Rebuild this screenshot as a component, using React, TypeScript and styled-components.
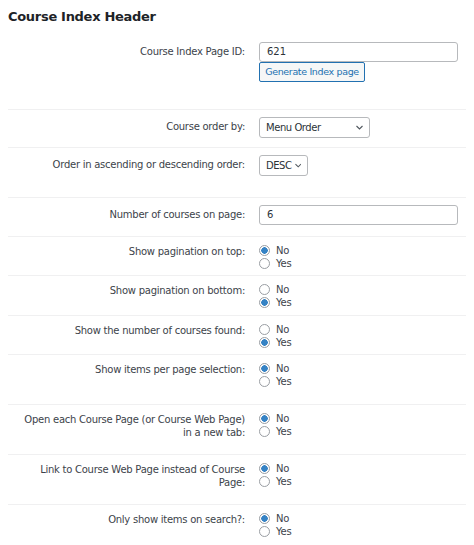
import React from 'react';
import styled, { createGlobalStyle } from 'styled-components';

type RadioSetting = {
  label: React.ReactNode;
  value: 'No' | 'Yes';
  height: number;
};

const GlobalStyle = createGlobalStyle`
  body {
    margin: 0;
    background: #fff;
    font-family: 'DejaVu Sans', Verdana, sans-serif;
    color: #3c434a;
  }
`;

const Chevron: React.FC = () => (
  <svg width="7" height="5" viewBox="0 0 7 5">
    <path d="M0.5 1l3 3 3-3" fill="none" stroke="#50575e" strokeWidth="1.1" />
  </svg>
);

const Radio: React.FC<{ checked: boolean; children: React.ReactNode }> = ({ checked, children }) => (
  <RadioLine>
    <RadioCircle $checked={checked} />
    {children}
  </RadioLine>
);

const radioSettings: RadioSetting[] = [
  { label: 'Show pagination on top:', value: 'No', height: 39 },
  { label: 'Show pagination on bottom:', value: 'Yes', height: 40 },
  { label: 'Show the number of courses found:', value: 'Yes', height: 39 },
  { label: 'Show items per page selection:', value: 'No', height: 50 },
  {
    label: (
      <>
        Open each Course Page (or Course Web Page)
        <br />
        in a new tab:
      </>
    ),
    value: 'No',
    height: 50,
  },
  {
    label: (
      <>
        Link to Course Web Page instead of Course
        <br />
        Page:
      </>
    ),
    value: 'No',
    height: 50,
  },
  { label: 'Only show items on search?:', value: 'No', height: 50 },
];

export default function App() {
  return (
    <Page>
      <GlobalStyle />
      <Title>Course Index Header</Title>
      <Table>
        <Row $height={74} $first>
          <Label>Course Index Page ID:</Label>
          <Field>
            <TextInput>621</TextInput>
            <Button>Generate Index page</Button>
          </Field>
        </Row>
        <Row $height={38}>
          <Label>Course order by:</Label>
          <Field>
            <Select $width={111}>
              Menu Order
              <Chevron />
            </Select>
          </Field>
        </Row>
        <Row $height={50}>
          <Label>Order in ascending or descending order:</Label>
          <Field>
            <Select $width={49}>
              DESC
              <Chevron />
            </Select>
          </Field>
        </Row>
        <Row $height={39}>
          <Label>Number of courses on page:</Label>
          <Field>
            <TextInput>6</TextInput>
          </Field>
        </Row>
        {radioSettings.map((s, i) => (
          <Row key={i} $height={s.height}>
            <Label $radio>{s.label}</Label>
            <RadioGroup>
              <Radio checked={s.value === 'No'}>No</Radio>
              <Radio checked={s.value === 'Yes'}>Yes</Radio>
            </RadioGroup>
          </Row>
        ))}
      </Table>
    </Page>
  );
}

const Page = styled.div`
  padding: 0 0 0 8px;
  width: 466px;
  box-sizing: border-box;
`;

const Title = styled.h2`
  margin: 0;
  padding: 9px 0 0;
  height: 35px;
  box-sizing: border-box;
  font-size: 13px;
  font-weight: bold;
  color: #1d2327;
  letter-spacing: -0.3px;
`;

const Table = styled.div`
  display: flex;
  flex-direction: column;
`;

const Row = styled.div<{ $height: number; $first?: boolean }>`
  display: grid;
  grid-template-columns: 237px 1fr;
  column-gap: 14px;
  align-items: start;
  height: ${({ $height }) => $height}px;
  box-sizing: border-box;
  padding-top: 7px;
  border-top: ${({ $first }) => ($first ? 'none' : '1px solid #f0f0f1')};
`;

const Label = styled.div<{ $radio?: boolean }>`
  text-align: right;
  font-size: 10px;
  line-height: 13px;
  letter-spacing: -0.25px;
  padding-top: ${({ $radio }) => ($radio ? '1px' : '3px')};
  color: #3c434a;
  white-space: nowrap;
`;

const Field = styled.div`
  display: flex;
  flex-direction: column;
  align-items: flex-start;
`;

const TextInput = styled.div`
  width: 199px;
  height: 20px;
  box-sizing: border-box;
  border: 1px solid #b7b9bc;
  border-radius: 3px;
  padding: 0 7px;
  font-size: 10px;
  line-height: 18px;
  color: #2c3338;
`;

const Button = styled.div`
  height: 20px;
  width: 106px;
  box-sizing: border-box;
  border: 1px solid #2271b1;
  border-radius: 2px;
  background: #f6f7f7;
  text-align: center;
  font-size: 9.5px;
  letter-spacing: -0.35px;
  line-height: 18px;
  color: #2271b1;
`;

const Select = styled.div<{ $width: number }>`
  width: ${({ $width }) => $width}px;
  height: 21px;
  box-sizing: border-box;
  border: 1px solid #b7b9bc;
  border-radius: 3px;
  padding: 0 6px 0 6px;
  display: flex;
  align-items: center;
  justify-content: space-between;
  gap: 3px;
  font-size: 10px;
  letter-spacing: -0.45px;
  color: #2c3338;
  background: #fff;
`;

const RadioGroup = styled.div`
  display: flex;
  flex-direction: column;
`;

const RadioLine = styled.div`
  display: flex;
  align-items: center;
  gap: 6px;
  font-size: 10px;
  letter-spacing: -0.2px;
  line-height: 13px;
  color: #3c434a;
`;

const RadioCircle = styled.span<{ $checked: boolean }>`
  width: 11px;
  height: 11px;
  box-sizing: border-box;
  border-radius: 50%;
  border: 1px solid #9a9ea3;
  background: ${({ $checked }) =>
    $checked ? 'radial-gradient(circle, #3582c4 0 3px, #fff 3.5px)' : '#fff'};
`;
